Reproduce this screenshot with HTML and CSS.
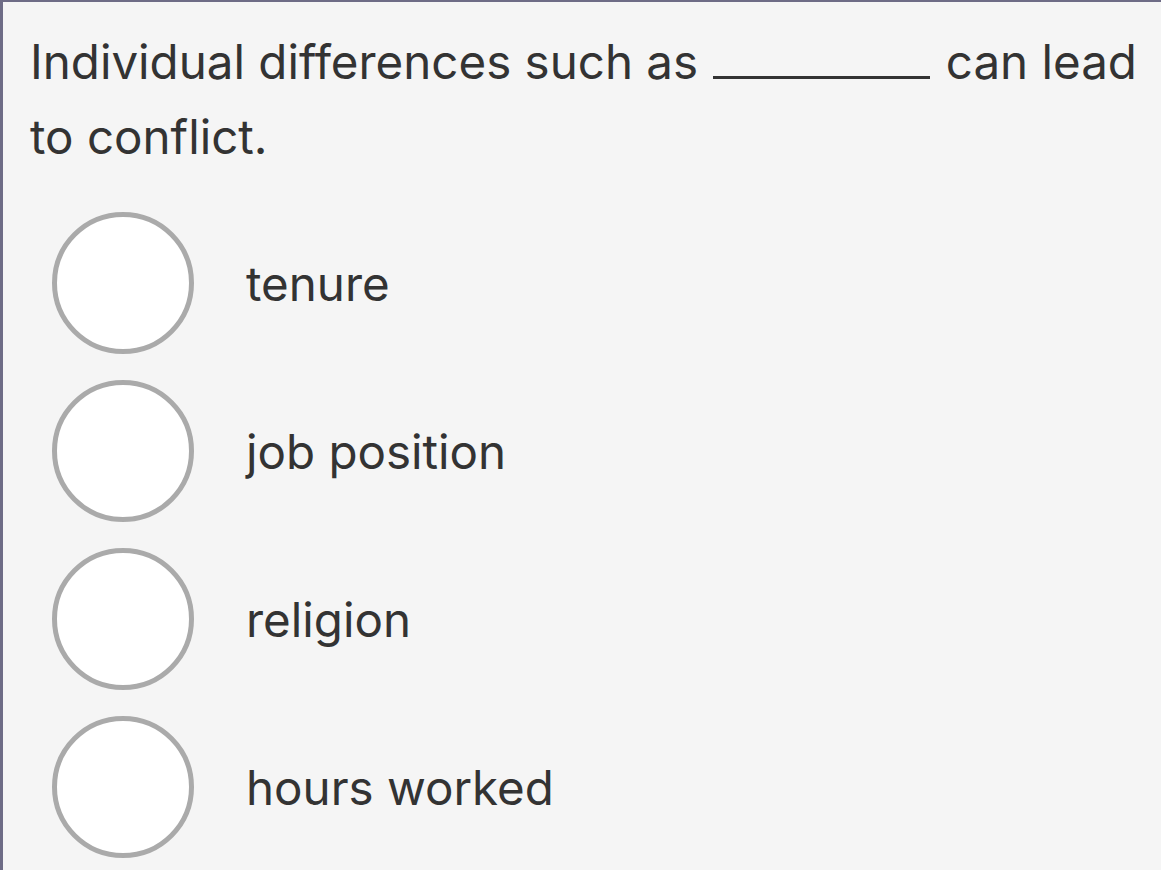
FILE: index.html
```html
<!DOCTYPE html>
<html>
<head>
<meta charset="utf-8">
<link rel="stylesheet" href="styles.css">
</head>
<body>
<div class="frame">
  <p class="question">Individual differences such as <span class="blank"></span> can lead to conflict.</p>
  <ul class="options">
    <li class="option"><span class="radio"></span><span class="label">tenure</span></li>
    <li class="option"><span class="radio"></span><span class="label">job position</span></li>
    <li class="option"><span class="radio"></span><span class="label">religion</span></li>
    <li class="option"><span class="radio"></span><span class="label">hours worked</span></li>
  </ul>
</div>
</body>
</html>
```
FILE: styles.css
```css
html, body {
  margin: 0;
  padding: 0;
  background: #f5f5f5;
}
body {
  font-family: Inter, "Liberation Sans", sans-serif;
  color: #333333;
}
.frame {
  width: 1161px;
  height: 870px;
  box-sizing: border-box;
  border-top: 2px solid #6e6c86;
  border-left: 3px solid #6e6c86;
  background: #f5f5f5;
  padding: 22px 0 0 27px;
  overflow: hidden;
}
.question {
  margin: 0;
  font-size: 47.5px;
  line-height: 75px;
  width: 1125px;
}
.blank {
  display: inline-block;
  width: 217px;
  margin: 0 2px;
  border-bottom: 3px solid #333;
  vertical-align: baseline;
}
.options {
  list-style: none;
  margin: 38px 0 0 0;
  padding: 0 0 0 22px;
  display: flex;
  flex-direction: column;
  gap: 26px;
}
.option {
  display: flex;
  align-items: center;
  height: 142px;
}
.radio {
  width: 142px;
  height: 142px;
  box-sizing: border-box;
  border: 5px solid #aaaaaa;
  border-radius: 50%;
  background: #ffffff;
  flex: none;
}
.label {
  margin-left: 52px;
  font-size: 47.5px;
}
```
